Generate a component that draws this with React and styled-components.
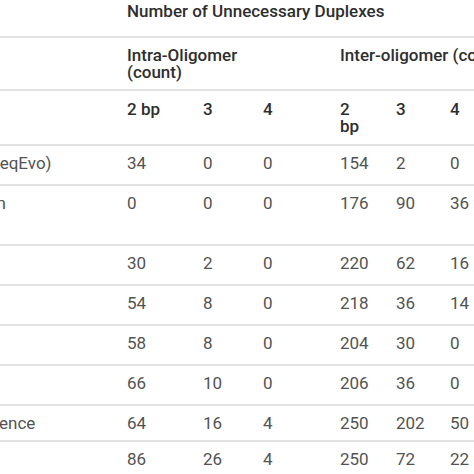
import styled, { createGlobalStyle } from 'styled-components';

const GlobalStyle = createGlobalStyle`
  html, body {
    margin: 0;
    padding: 0;
    background: #fff;
  }
  body {
    font-family: Roboto, 'Liberation Sans', sans-serif;
  }
`;

const Viewport = styled.div`
  width: 474px;
  height: 474px;
  overflow: hidden;
`;

const StyledTable = styled.table`
  table-layout: fixed;
  width: 640px;
  margin-left: -158px;
  margin-top: -5px;
  border-collapse: collapse;
  font-size: 17px;
`;

const HeadCell = styled.th`
  padding: ${p => p.$pad || '9px 16px'};
  text-align: left;
  vertical-align: top;
  font-weight: 500;
  line-height: 17px;
  color: #2e2e2e;
  border-bottom: 2px solid #e2e2e2;
  white-space: ${p => (p.$nowrap ? 'nowrap' : 'normal')};
`;

const Cell = styled.td`
  padding: ${p => (p.$tight ? '8px 16px 7px' : '8px 16px 10.5px')};
  text-align: left;
  vertical-align: top;
  line-height: 19.5px;
  color: #535353;
  border-bottom: 2px solid #e2e2e2;
  white-space: nowrap;
`;

const rows = [
  { label: 'Evolved designs (SeqEvo)', values: [34, 0, 0, 154, 2, 0] },
  { label: 'Random generation', sub: '(baseline)', values: [0, 0, 0, 176, 90, 36] },
  { label: 'NUPACK', values: [30, 2, 0, 220, 62, 16] },
  { label: 'DNA Designer', values: [54, 8, 0, 218, 36, 14] },
  { label: 'SEQUIN', values: [58, 8, 0, 204, 30, 0] },
  { label: 'DyNAMiC', values: [66, 10, 0, 206, 36, 0] },
  { label: 'Un-optimized sequence', values: [64, 16, 4, 250, 202, 50], tight: true },
  { label: 'Natural', values: [86, 26, 4, 250, 72, 22] },
];

const TOP = '8px 16px 16px';
const GROUP = '9px 16px 8px';
const SIZE = '10px 16px 9px';

export default function App() {
  return (
    <Viewport>
      <GlobalStyle />
      <StyledTable>
        <colgroup>
          <col style={{ width: 269 }} />
          <col style={{ width: 76 }} />
          <col style={{ width: 60 }} />
          <col style={{ width: 77 }} />
          <col style={{ width: 56 }} />
          <col style={{ width: 54 }} />
          <col style={{ width: 48 }} />
        </colgroup>
        <thead>
          <tr>
            <HeadCell $pad={TOP} />
            <HeadCell $pad={TOP} colSpan={6} $nowrap>
              Number of Unnecessary Duplexes
            </HeadCell>
          </tr>
          <tr>
            <HeadCell $pad={GROUP} />
            <HeadCell $pad={GROUP} colSpan={3}>
              Intra-Oligomer
              <br />
              (count)
            </HeadCell>
            <HeadCell $pad={GROUP} colSpan={3} $nowrap>
              Inter-oligomer (count)
            </HeadCell>
          </tr>
          <tr>
            <HeadCell $pad={SIZE} />
            <HeadCell $pad={SIZE}>2 bp</HeadCell>
            <HeadCell $pad={SIZE}>3</HeadCell>
            <HeadCell $pad={SIZE}>4</HeadCell>
            <HeadCell $pad={SIZE}>2 bp</HeadCell>
            <HeadCell $pad={SIZE}>3</HeadCell>
            <HeadCell $pad={SIZE}>4</HeadCell>
          </tr>
        </thead>
        <tbody>
          {rows.map(row => (
            <tr key={row.label}>
              <Cell $tight={row.tight}>
                {row.label}
                {row.sub && (
                  <>
                    <br />
                    {row.sub}
                  </>
                )}
              </Cell>
              {row.values.map((v, i) => (
                <Cell key={i} $tight={row.tight}>
                  {v}
                </Cell>
              ))}
            </tr>
          ))}
        </tbody>
      </StyledTable>
    </Viewport>
  );
}
